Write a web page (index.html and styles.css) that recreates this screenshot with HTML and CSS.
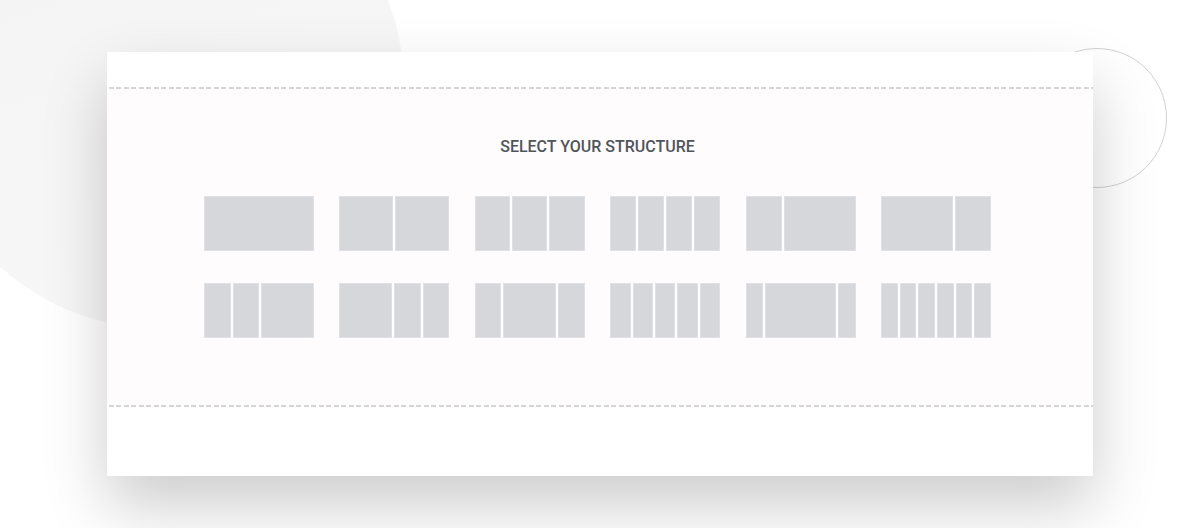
FILE: index.html
```html
<!DOCTYPE html>
<html lang="en">
<head>
<meta charset="utf-8">
<title>Select your structure</title>
<link rel="stylesheet" href="styles.css">
</head>
<body>
  <div class="blob"></div>
  <div class="ring"></div>
  <main class="card">
    <div class="card-top"></div>
    <div class="dash"></div>
    <section class="picker">
      <h2 class="title">SELECT YOUR STRUCTURE</h2>
      <div class="presets">
        <div class="preset"><span class="c g1"></span></div>
        <div class="preset"><span class="c g1"></span><span class="c g1"></span></div>
        <div class="preset"><span class="c g1"></span><span class="c g1"></span><span class="c g1"></span></div>
        <div class="preset"><span class="c g1"></span><span class="c g1"></span><span class="c g1"></span><span class="c g1"></span></div>
        <div class="preset"><span class="c g1"></span><span class="c g2"></span></div>
        <div class="preset"><span class="c g2"></span><span class="c g1"></span></div>

        <div class="preset"><span class="c g1"></span><span class="c g1"></span><span class="c g2"></span></div>
        <div class="preset"><span class="c g2"></span><span class="c g1"></span><span class="c g1"></span></div>
        <div class="preset"><span class="c g1"></span><span class="c g2"></span><span class="c g1"></span></div>
        <div class="preset"><span class="c g1"></span><span class="c g1"></span><span class="c g1"></span><span class="c g1"></span><span class="c g1"></span></div>
        <div class="preset"><span class="c g1"></span><span class="c g4"></span><span class="c g1"></span></div>
        <div class="preset"><span class="c g1"></span><span class="c g1"></span><span class="c g1"></span><span class="c g1"></span><span class="c g1"></span><span class="c g1"></span></div>
      </div>
    </section>
    <div class="dash"></div>
    <div class="card-bottom"></div>
  </main>
</body>
</html>
```
FILE: styles.css
```css
* { box-sizing: border-box; }

html, body {
  margin: 0;
  width: 1200px;
  height: 528px;
  overflow: hidden;
  background: #ffffff;
}

body {
  position: relative;
  padding: 52px 0 0 107px;
  font-family: Roboto, "Liberation Sans", Arial, sans-serif;
}

.blob {
  position: absolute;
  left: -80px;
  top: -155px;
  width: 484px;
  height: 484px;
  border-radius: 50%;
  background: linear-gradient(160deg, #f3f3f3 0%, #f6f6f6 60%, #f7f7f7 100%);
}

.ring {
  position: absolute;
  left: 1027px;
  top: 48px;
  width: 140px;
  height: 140px;
  border-radius: 50%;
  border: 1px solid #d2d2d2;
}

.card {
  position: relative;
  width: 986px;
  height: 424px;
  background: #ffffff;
  box-shadow: 0 30px 60px rgba(0, 0, 0, 0.2);
  display: flex;
  flex-direction: column;
}

.card-top {
  height: 35px;
}

.dash {
  height: 2px;
  margin-left: 2px;
  background: repeating-linear-gradient(90deg, #d4d5d8 0 5px, transparent 5px 7.5px);
}

.picker {
  height: 316px;
  background: #fefcfc;
  padding: 48px 5px 0 0;
  display: flex;
  flex-direction: column;
  align-items: center;
}

.title {
  margin: 0;
  font-size: 16px;
  line-height: 19px;
  font-weight: 500;
  color: #50555b;
  letter-spacing: 0;
}

.presets {
  margin-top: 40px;
  display: grid;
  grid-template-columns: repeat(6, 110px);
  column-gap: 25.4px;
  row-gap: 32px;
}

.preset {
  height: 55px;
  display: flex;
  gap: 2px;
}

.c {
  display: block;
  background: #d5d7da;
  box-shadow: inset 0 0 0 1px #e0e1e4;
  min-width: 0;
}

.g1 { flex: 1 1 0; }
.g2 { flex: 2 1 0; }
.g4 { flex: 4 1 0; }

.card-bottom {
  flex: 1;
}
```
